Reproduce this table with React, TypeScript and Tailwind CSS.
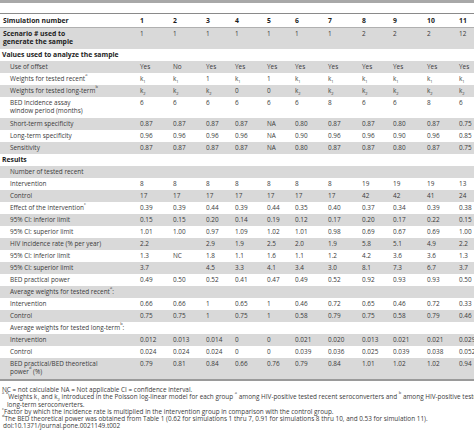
import type { ReactNode } from 'react';

type Row = {
  label: ReactNode;
  values?: ReactNode[];
  kind: 'section' | 'item' | 'bold';
  tall?: boolean;
  gray?: boolean;
};

const Sub = ({ children }: { children: ReactNode }) => (
  <sub className="text-[4px] leading-none align-[-1.5px]">{children}</sub>
);
const Sup = ({ children }: { children: ReactNode }) => (
  <sup className="text-[4px] leading-none align-[2.5px]">{children}</sup>
);

const K1 = <>k<Sub>1</Sub></>;
const K2 = <>k<Sub>2</Sub></>;

const ROWS: Row[] = [
  {
    label: <>Scenario # used to<br />generate the sample</>,
    values: ['1', '1', '1', '1', '1', '1', '1', '2', '2', '2', '12'],
    kind: 'bold',
    tall: true,
    gray: true,
  },
  { label: 'Values used to analyze the sample', kind: 'section' },
  { label: 'Use of offset', values: ['Yes', 'No', 'Yes', 'Yes', 'Yes', 'Yes', 'Yes', 'Yes', 'Yes', 'Yes', 'Yes'], kind: 'item', gray: true },
  { label: <>Weights for tested recent<Sup>a</Sup></>, values: [K1, K1, '1', K1, '1', K1, K1, K1, K1, K1, K1], kind: 'item' },
  { label: <>Weights for tested long-term<Sup>b</Sup></>, values: [K2, K2, K2, '0', '0', K2, K2, K2, K2, K2, K2], kind: 'item', gray: true },
  { label: <>BED Incidence assay<br />window period (months)</>, values: ['6', '6', '6', '6', '6', '6', '8', '6', '6', '8', '6'], kind: 'item', tall: true },
  { label: 'Short-term specificity', values: ['0.87', '0.87', '0.87', '0.87', 'NA', '0.80', '0.87', '0.87', '0.80', '0.87', '0.75'], kind: 'item', gray: true },
  { label: 'Long-term specificity', values: ['0.96', '0.96', '0.96', '0.96', 'NA', '0.90', '0.96', '0.96', '0.90', '0.96', '0.85'], kind: 'item' },
  { label: 'Sensitivity', values: ['0.87', '0.87', '0.87', '0.87', 'NA', '0.80', '0.87', '0.87', '0.80', '0.87', '0.75'], kind: 'item', gray: true },
  { label: 'Results', kind: 'section' },
  { label: 'Number of tested recent', kind: 'item', gray: true },
  { label: 'Intervention', values: ['8', '8', '8', '8', '8', '8', '8', '19', '19', '19', '13'], kind: 'item' },
  { label: 'Control', values: ['17', '17', '17', '17', '17', '17', '17', '42', '42', '41', '24'], kind: 'item', gray: true },
  { label: <>Effect of the intervention<Sup>c</Sup></>, values: ['0.39', '0.39', '0.44', '0.39', '0.44', '0.35', '0.40', '0.37', '0.34', '0.39', '0.38'], kind: 'item' },
  { label: '95% CI: inferior limit', values: ['0.15', '0.15', '0.20', '0.14', '0.19', '0.12', '0.17', '0.20', '0.17', '0.22', '0.15'], kind: 'item', gray: true },
  { label: '95% CI: superior limit', values: ['1.01', '1.00', '0.97', '1.09', '1.02', '1.01', '0.98', '0.69', '0.67', '0.69', '1.00'], kind: 'item' },
  { label: 'HIV incidence rate (% per year)', values: ['2.2', '', '2.9', '1.9', '2.5', '2.0', '1.9', '5.8', '5.1', '4.9', '2.2'], kind: 'item', gray: true },
  { label: '95% CI: inferior limit', values: ['1.3', 'NC', '1.8', '1.1', '1.6', '1.1', '1.2', '4.2', '3.6', '3.6', '1.3'], kind: 'item' },
  { label: '95% CI: superior limit', values: ['3.7', '', '4.5', '3.3', '4.1', '3.4', '3.0', '8.1', '7.3', '6.7', '3.7'], kind: 'item', gray: true },
  { label: 'BED practical power', values: ['0.49', '0.50', '0.52', '0.41', '0.47', '0.49', '0.52', '0.92', '0.93', '0.93', '0.50'], kind: 'item' },
  { label: <>Average weights for tested recent<Sup>a</Sup>:</>, kind: 'item', gray: true },
  { label: 'Intervention', values: ['0.66', '0.66', '1', '0.65', '1', '0.46', '0.72', '0.65', '0.46', '0.72', '0.33'], kind: 'item' },
  { label: 'Control', values: ['0.75', '0.75', '1', '0.75', '1', '0.58', '0.79', '0.75', '0.58', '0.79', '0.46'], kind: 'item', gray: true },
  { label: <>Average weights for tested long-term<Sup>b</Sup>:</>, kind: 'item' },
  { label: 'Intervention', values: ['0.012', '0.013', '0.014', '0', '0', '0.021', '0.020', '0.013', '0.021', '0.021', '0.029'], kind: 'item', gray: true },
  { label: 'Control', values: ['0.024', '0.024', '0.024', '0', '0', '0.039', '0.036', '0.025', '0.039', '0.038', '0.052'], kind: 'item' },
  {
    label: <>BED practical/BED theoretical<br />power<Sup>d</Sup> (%)</>,
    values: ['0.79', '0.81', '0.84', '0.66', '0.76', '0.79', '0.84', '1.01', '1.02', '1.02', '0.94'],
    kind: 'item',
    tall: true,
    gray: true,
  },
];

const HEAD = ['1', '2', '3', '4', '5', '6', '7', '8', '9', '10', '11'];

export default function App() {
  return (
    <div className="w-[474px] h-[432px] overflow-hidden bg-white font-['Open_Sans',sans-serif] text-[#3a3a3a]">
      <div className="h-[3px] bg-[#a8a8a8]" />
      <div className="h-[10px]" />
      <table className="table-fixed w-[490px] border-collapse text-[6.4px] leading-[8px]">
        <colgroup>
          <col className="w-[140px]" />
          <col className="w-[33px]" />
          <col className="w-[33px]" />
          <col className="w-[29px]" />
          <col className="w-[32px]" />
          <col className="w-[28px]" />
          <col className="w-[33px]" />
          <col className="w-[34px]" />
          <col className="w-[31px]" />
          <col className="w-[34px]" />
          <col className="w-[32px]" />
          <col className="w-[31px]" />
        </colgroup>
        <thead>
          <tr className="h-[14px] border-t border-b border-t-[#8a8a8a] border-b-[#b0b0b0] font-bold text-[#1c1c1c] text-[6.8px]">
            <th className="text-left font-bold pl-[3px] p-0 align-middle">Simulation number</th>
            {HEAD.map((h) => (
              <th key={h} className="text-left font-bold p-0 align-middle">{h}</th>
            ))}
          </tr>
        </thead>
        <tbody>
          {ROWS.map((r, i) => (
            <tr key={i} className={`${r.tall ? 'h-[21px]' : 'h-[12px]'} ${r.gray ? 'bg-[#d9d9d9]' : 'bg-white'}`}>
              <td
                colSpan={r.values ? 1 : 12}
                className={`p-0 pt-[2px] align-top whitespace-nowrap ${
                  r.kind === 'item'
                    ? 'pl-[10px]'
                    : r.kind === 'section'
                      ? 'pl-[2px] font-bold text-[#1c1c1c] text-[6.8px]'
                      : 'pl-[3px] font-bold text-[#1c1c1c] text-[6.8px]'
                }`}
              >
                {r.label}
              </td>
              {r.values?.map((v, j) => (
                <td key={j} className="p-0 pt-[2px] align-top whitespace-nowrap">{v}</td>
              ))}
            </tr>
          ))}
          <tr className="h-[2px]">
            <td colSpan={12} className="p-0 bg-[#9a9a9a]" />
          </tr>
        </tbody>
      </table>
      <div className="pt-[5px] text-[6.4px] leading-[7px] text-[#3a3a3a] whitespace-nowrap">
        <div className="pl-[2px]">NC = not calculable NA = Not applicable CI = confidence interval.</div>
        <div className="pl-[2px]">
          <Sup>a</Sup> <Sup>b</Sup>Weights k<Sub>1</Sub> and k<Sub>2</Sub> introduced in the Poisson log-linear model for each group <Sup>a</Sup> among HIV-positive tested recent seroconverters and <Sup>b</Sup> among HIV-positive tested
        </div>
        <div className="pl-[7px]">long-term seroconverters.</div>
        <div className="pl-[2px]"><Sup>c</Sup>Factor by which the incidence rate is multiplied in the intervention group in comparison with the control group.</div>
        <div className="pl-[2px]"><Sup>d</Sup>The BED theoretical power was obtained from Table 1 (0.62 for simulations 1 thru 7, 0.91 for simulations 8 thru 10, and 0.53 for simulation 11).</div>
        <div className="pl-[3px]">doi:10.1371/journal.pone.0021149.t002</div>
      </div>
    </div>
  );
}
